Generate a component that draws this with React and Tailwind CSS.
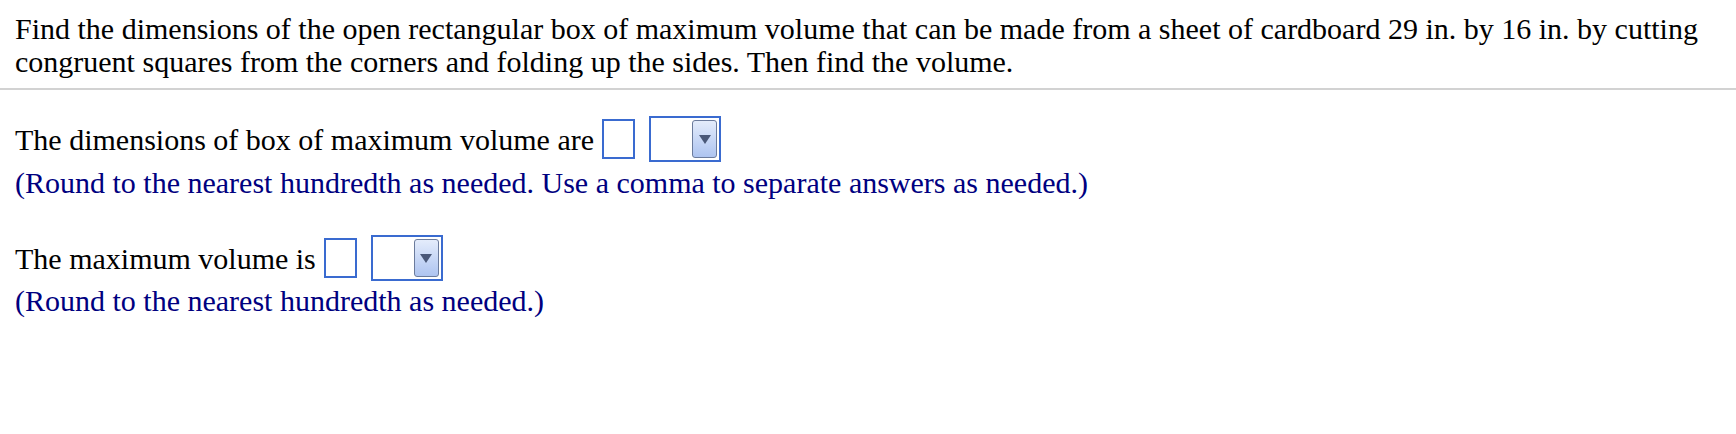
import React from 'react';

function AnswerBox() {
  return <span className="block w-[33px] h-[40px] border-2 border-[#3a6bd0] bg-white" />;
}

function UnitSelect() {
  return (
    <span className="flex justify-end w-[72px] h-[46px] border-2 border-[#3a6bd0] bg-white p-[2px]">
      <span className="flex items-center justify-center w-[25px] h-full rounded-[3px] border border-[#6b7b9c] bg-gradient-to-b from-[#e4ecfb] to-[#aec4f0]">
        <svg width="12" height="9" viewBox="0 0 12 9">
          <polygon points="0,0 12,0 6,9" fill="#4a5878" />
        </svg>
      </span>
    </span>
  );
}

function AnswerRow({ label }) {
  return (
    <div className="flex items-center">
      <span>{label}</span>
      <span className="ml-[8px]"><AnswerBox /></span>
      <span className="ml-[14px]"><UnitSelect /></span>
    </div>
  );
}

export default function App() {
  return (
    <div className="min-h-screen bg-white text-black text-[30px] leading-[33px] font-['Liberation_Serif','Times_New_Roman',serif]">
      <div className="px-[15px] pt-[12px] pb-[10px] border-b-2 border-[#d2d2d2]">
        Find the dimensions of the open rectangular box of maximum volume that can be made from a sheet of cardboard 29 in. by 16 in. by cutting congruent squares from the corners and folding up the sides. Then find the volume.
      </div>

      <div className="px-[15px] pt-[26px]">
        <AnswerRow label="The dimensions of box of maximum volume are" />
        <p className="mt-[4px] text-[#000080]">
          (Round to the nearest hundredth as needed. Use a comma to separate answers as needed.)
        </p>

        <div className="mt-[36px]">
          <AnswerRow label="The maximum volume is" />
        </div>
        <p className="mt-[3px] text-[#000080]">(Round to the nearest hundredth as needed.)</p>
      </div>
    </div>
  );
}
